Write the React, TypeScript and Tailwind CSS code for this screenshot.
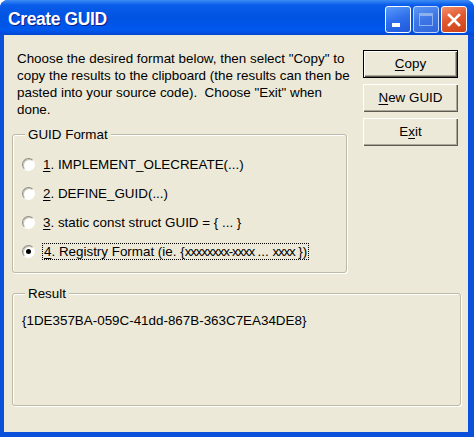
import React from "react";

function Radio({ checked }: { checked?: boolean }) {
  return (
    <span className="w-[13px] h-[13px] shrink-0 rounded-full bg-white border border-t-[#8E8C80] border-l-[#8E8C80] border-r-white border-b-white shadow-[inset_1px_1px_#C9C6B8] flex items-center justify-center">
      {checked ? <span className="w-[5px] h-[5px] rounded-full bg-black" /> : null}
    </span>
  );
}

function RadioRow({ checked, num, children, focus }: { checked?: boolean; num: string; children: React.ReactNode; focus?: boolean }) {
  return (
    <div className="h-[29px] flex items-center pl-[9px]">
      <Radio checked={checked} />
      <span
        className={
          focus
            ? "ml-[7px] border border-dotted border-black px-[1px] leading-[15px] whitespace-nowrap"
            : "ml-[8px] leading-[15px] whitespace-nowrap"
        }
      >
        <span className="underline underline-offset-2">{num}</span>
        {children}
      </span>
    </div>
  );
}

function Btn({ children, def }: { children: React.ReactNode; def?: boolean }) {
  return (
    <div
      className={
        def
          ? "h-[28px] w-[95px] flex items-center justify-center bg-[#ECE9D8] border border-black shadow-[inset_1px_1px_#fff,inset_-1px_-1px_#5E5C52,inset_-2px_-2px_#ACA899]"
          : "h-[28px] w-[95px] flex items-center justify-center bg-[#ECE9D8] shadow-[inset_1px_1px_#fff,inset_-1px_-1px_#5E5C52,inset_-2px_-2px_#ACA899]"
      }
    >
      {children}
    </div>
  );
}

export default function App() {
  return (
    <div className="w-[474px] h-[437px] bg-white font-['Liberation_Sans',Arial,sans-serif] text-[13.4px] text-black">
      <div className="w-full h-full flex flex-col rounded-t-[8px] overflow-hidden bg-[#0B50DA]">
        {/* Title bar */}
        <div className="h-[35px] shrink-0 flex items-start bg-[linear-gradient(180deg,#3D8DF5_0%,#0A5DEB_14%,#0053E1_50%,#0058EE_86%,#0046D2_100%)]">
          <div className="pl-[8px] pt-[9px] text-white font-bold text-[17.5px] leading-[20px] [text-shadow:1px_1px_#0A1B8A] tracking-[-0.4px]">
            Create GUID
          </div>
          <div className="ml-auto mr-[7px] mt-[6px] flex gap-[2px]">
            <div className="w-[26px] h-[27px] rounded-[3px] border border-white bg-[linear-gradient(160deg,#5A9BFA_0%,#2E6EEB_50%,#1F59DB_100%)] relative">
              <span className="absolute left-[6px] top-[16px] w-[8px] h-[4px] bg-white" />
            </div>
            <div className="w-[26px] h-[27px] rounded-[3px] border border-[#C6D6F6] bg-[linear-gradient(160deg,#5F97F2_0%,#3C76E6_50%,#3067DC_100%)] relative">
              <span className="absolute left-[5px] top-[6px] w-[14px] h-[13px] border border-[#8DB0EE] border-t-[3px]" />
            </div>
            <div className="w-[26px] h-[27px] rounded-[3px] border border-white bg-[linear-gradient(160deg,#F0916E_0%,#E2592F_45%,#CC4218_100%)] flex items-center justify-center">
              <svg width="14" height="14" viewBox="0 0 14 14">
                <path d="M2 2 L12 12 M12 2 L2 12" stroke="white" strokeWidth="2.6" strokeLinecap="square" />
              </svg>
            </div>
          </div>
        </div>

        {/* Client area */}
        <div className="flex-1 ml-[4px] mr-[6px] mb-[5px] bg-[#ECE9D8] pl-[8px] pt-[15px] flex flex-col">
          <div className="flex items-start">
            <div className="w-[335px] flex flex-col">
              <div className="pl-[5px] leading-[17px] whitespace-nowrap">
                <div>Choose the desired format below, then select "Copy" to</div>
                <div>copy the results to the clipboard (the results can then be</div>
                <div>pasted into your source code).&nbsp; Choose "Exit" when</div>
                <div>done.</div>
              </div>
              <div className="relative mt-[16px] h-[139px] rounded-[3px] border border-[#BDBAA8] shadow-[inset_1px_1px_#fff,1px_1px_#fff] pt-[15px]">
                <span className="absolute left-[12px] -top-[9px] px-[3px] leading-[17px] bg-[#ECE9D8]">GUID Format</span>
                <RadioRow num="1">. IMPLEMENT_OLECREATE(...)</RadioRow>
                <RadioRow num="2">. DEFINE_GUID(...)</RadioRow>
                <RadioRow num="3">. static const struct GUID = {"{ ... }"}</RadioRow>
                <RadioRow checked focus num="4">
                  . Registry Format (ie. {"{"}
                  <span className="tracking-[-1.2px]">xxxxxxxx-xxxx</span> ... <span className="tracking-[-1.2px]">xxxx</span> {"})"}
                </RadioRow>
              </div>
            </div>
            <div className="ml-[16px] flex flex-col gap-[6px]">
              <Btn def>
                <span>
                  <span className="underline underline-offset-2">C</span>opy
                </span>
              </Btn>
              <Btn>
                <span>
                  <span className="underline underline-offset-2">N</span>ew GUID
                </span>
              </Btn>
              <Btn>
                <span>
                  E<span className="underline underline-offset-2">x</span>it
                </span>
              </Btn>
            </div>
          </div>
          <div className="relative mt-[20px] w-[449px] h-[113px] rounded-[3px] border border-[#BDBAA8] shadow-[inset_1px_1px_#fff,1px_1px_#fff] pl-[9px] pt-[18px]">
            <span className="absolute left-[12px] -top-[9px] px-[3px] leading-[17px] bg-[#ECE9D8]">Result</span>
            <div className="leading-[17px] whitespace-nowrap">{"{1DE357BA-059C-41dd-867B-363C7EA34DE8}"}</div>
          </div>
        </div>
      </div>
    </div>
  );
}
